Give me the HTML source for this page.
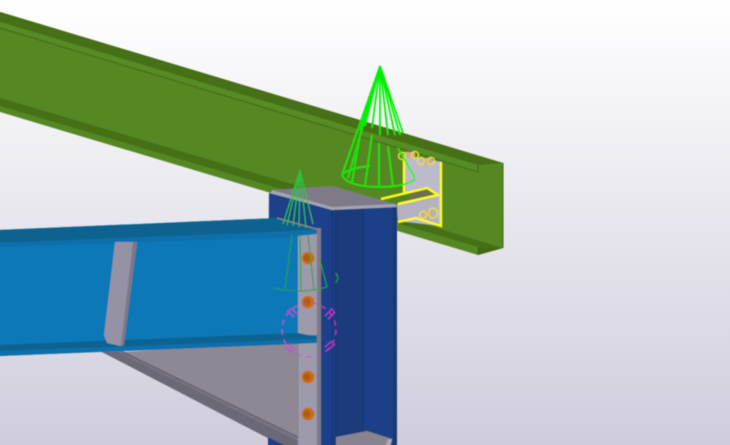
<!DOCTYPE html>
<html><head><meta charset="utf-8"><style>
html,body{margin:0;padding:0;width:730px;height:445px;overflow:hidden;background:#fff}
svg{display:block}
</style></head><body>
<svg xmlns="http://www.w3.org/2000/svg" width="730" height="445" viewBox="0 0 730 445">
<defs>
<linearGradient id="bg" x1="0" y1="0" x2="0" y2="1">
<stop offset="0" stop-color="#ffffff"/><stop offset="1" stop-color="#cfcddc"/>
</linearGradient>
<filter id="s" filterUnits="userSpaceOnUse" x="-20" y="-20" width="770" height="500"><feGaussianBlur stdDeviation=".4"/></filter>
</defs>
<rect width="730" height="445" fill="url(#bg)"/>
<g filter="url(#s)">

<!-- green beam -->
<polygon points="-10,9 503,163 503,248 478,255 -10,109" fill="#548723"/>
<polygon points="-10,9 503,163 478,165 -10,19" fill="#446f18"/>
<polygon points="-10,19 478,165 478,173 -10,25" fill="#578b25"/>
<polyline points="-10,25 478,172 478,165" fill="none" stroke="#3f6816" stroke-width="1"/>
<polygon points="-10,95 295,185 503,248 478,247 -10,103" fill="#446f18"/>
<polygon points="478,247 503,248 478,255" fill="#3f6816"/>
<line x1="503" y1="163" x2="503" y2="248" stroke="#3f6816" stroke-width="1"/>
<line x1="478" y1="247" x2="478" y2="255" stroke="#3f6816" stroke-width="1"/>

<!-- connection plate -->
<polygon points="403,155 442,162 442,226 398,221 398,205 403,195" fill="#bcbbc9"/>
<polygon points="381,198 427,188 438,195 397,203" fill="#6d6f4e"/>
<polygon points="381,198 405,193 412,198 397,203" fill="#4f8420"/>
<polygon points="397,204 438,195 438,224 415,218 398,222" fill="#b4b2c0"/>
<g fill="none" stroke="#ffff00" stroke-width="2.2">
<polyline points="404,158 404,192"/>
<polyline points="441,162 441,226 416,218 398,222"/>
<polyline points="381,199 427,188 438,195 398,204"/>
<polyline points="367,210 381,213"/>
</g>
<line x1="362" y1="210" x2="362" y2="233" stroke="#ffff00" stroke-width="1.5"/>
<rect x="404" y="152" width="11" height="6" fill="#c9ad92"/>
<rect x="423" y="158" width="9" height="6" fill="#c9ad92"/>
<rect x="424" y="211" width="9" height="7" fill="#c9ad92"/>
<g fill="none" stroke="#f0e020" stroke-width="1.3">
<ellipse cx="402" cy="156" rx="3.5" ry="3.5"/><ellipse cx="415" cy="155" rx="3.5" ry="3.5"/>
<ellipse cx="421" cy="161" rx="3.5" ry="3.5"/><ellipse cx="431" cy="161" rx="3.5" ry="3.5"/>
<ellipse cx="423" cy="215" rx="3.5" ry="3.5"/><ellipse cx="433" cy="213" rx="4.5" ry="5"/>
</g>

<!-- column -->
<polygon points="269,193 332,210 397,207 397,460 268,460" fill="#1d3f87"/>
<polygon points="269,193 332,210 334,460 268,460" fill="#1f4189"/>
<rect x="332" y="209" width="4" height="251" fill="#1e3e84"/>
<line x1="332" y1="209" x2="332" y2="460" stroke="#173268" stroke-width=".8"/>
<rect x="336" y="209" width="27" height="251" fill="#1b3a7b"/>
<line x1="336" y1="209" x2="336" y2="460" stroke="#173268" stroke-width=".8"/>
<rect x="363" y="208" width="30" height="252" fill="#1e3f88"/>
<rect x="393" y="207" width="4" height="253" fill="#1a3773"/>
<line x1="363" y1="208" x2="363" y2="460" stroke="#173268" stroke-width=".8"/>

<!-- cap plate -->
<polygon points="272,190 332,186 395,204 332,208" fill="#7e7a87"/>
<polygon points="272,190 332,207 395,204 397,207 332,210 271,193" fill="#a5a3b4"/>

<!-- bottom plate -->
<polygon points="336,437 367,431 392,439 387,460 336,460" fill="#87838f"/>
<polygon points="392,439 387,460 380,460 388,439" fill="#aaa8b6"/>

<!-- haunch -->
<polygon points="123,352 298,340 298,437" fill="#8e8794"/>
<polygon points="100,351 123,351 298,437 298,460 285,460 268,437" fill="#767382"/>
<polyline points="123,352 298,437" fill="none" stroke="#5f5c6a" stroke-width="1"/>
<polygon points="118,352 298,441 298,460 285,447 100,351" fill="#6c6977"/>
<polygon points="268,437 286,446 290,460 268,460" fill="#1d3f87"/>

<!-- end plate -->
<rect x="298" y="230" width="19" height="230" fill="#9c9aab"/>
<rect x="317" y="228" width="4" height="232" fill="#7d7a88"/>
<line x1="298" y1="230" x2="298" y2="460" stroke="#86838f" stroke-width="1"/>

<!-- blue beam -->
<polygon points="-10,230.4 278,218 320,229 320,339 298,344 -10,356.4" fill="#0b78b8"/>
<polygon points="298,230 317,229 317,335 298,335" fill="#9c9aab"/>
<polygon points="-10,230.4 278,218 320,230 -10,243.4" fill="#09628f"/>
<polygon points="-10,243.4 320,230 320,236 -10,247.4" fill="#0a6fab"/>
<polygon points="-10,345.4 298,333 317,337 317,341 -10,351.4" fill="#09628f"/>
<polygon points="-10,351.4 317,339 317,343 -10,356.4" fill="#0a70ad"/>
<polygon points="298,236 317,234 317,333 298,333" fill="#9c9aab"/>
<polygon points="317,229 321,229 321,460 317,460" fill="#7d7a88"/>
<polygon points="298,333 317,338 298,339" fill="#0a628f"/>
<line x1="277" y1="218" x2="320" y2="230" stroke="#83808c" stroke-width="1.5"/>

<!-- stiffener -->
<polygon points="115,242 137,242 123,345 120,346 107,343 104,335" fill="#9592a5"/>
<polygon points="133,242 137,242 124,345 121,346" fill="#7b7887"/>

<!-- bolts -->
<g fill="#cc6c10">
<circle cx="308" cy="258" r="6.3"/><circle cx="308" cy="302" r="6.3"/>
<circle cx="308" cy="377" r="6.3"/><circle cx="308" cy="414" r="6.3"/>
</g>
<g fill="#ae5c0a">
<circle cx="307" cy="258" r="3.5"/><circle cx="307" cy="302" r="3.5"/>
<circle cx="307" cy="377" r="3.5"/><circle cx="307" cy="414" r="3.5"/>
</g>

<!-- small cone -->
<g fill="none" stroke="#2cc040" stroke-width="1.2">
<line x1="300" y1="170" x2="283" y2="224"/><line x1="300" y1="170" x2="287" y2="225"/>
<line x1="300" y1="170" x2="293" y2="226"/><line x1="300" y1="170" x2="299" y2="227"/>
<line x1="300" y1="170" x2="306" y2="228"/><line x1="300" y1="170" x2="313" y2="224"/>
</g>
<g fill="none" stroke="#25a038" stroke-width="1.1">
<line x1="292" y1="235" x2="285" y2="289"/>
<line x1="300" y1="235" x2="301" y2="291"/>
<line x1="308" y1="235" x2="314" y2="290"/>
<line x1="320" y1="260" x2="327" y2="287"/>
<polyline points="273,288 285,290 300,291 314,290 327,287"/>
<polyline points="336,273 338,278 336,283"/>
</g>

<!-- magenta -->
<g fill="none" stroke="#d22fd8" stroke-width="1">
<circle cx="309" cy="330" r="27" stroke-dasharray="5 5"/>
<path d="M288 311l6 6M291 308l6 6M287 312l4-3"/>
<path d="M325 316l7-7M328 319l7-7M331 308l3 4"/>
<path d="M285 347l7 6M288 344l7 6"/>
<path d="M325 347l7-6M328 350l7-6"/>
</g>

<!-- large cone -->
<g fill="none" stroke="#00f000" stroke-width="1.7">
<line x1="380" y1="66" x2="342" y2="175"/>
<line x1="380" y1="66" x2="348" y2="178"/>
<line x1="380" y1="66" x2="360" y2="130"/>
<line x1="380" y1="66" x2="365" y2="126"/>
<line x1="380" y1="66" x2="372" y2="128"/>
<line x1="380" y1="66" x2="380" y2="135"/>
<line x1="380" y1="66" x2="388" y2="135"/>
<line x1="380" y1="66" x2="395" y2="135"/>
<line x1="380" y1="66" x2="400" y2="135"/>
<line x1="380" y1="66" x2="403" y2="133"/>
<line x1="360" y1="135" x2="352" y2="182"/>
<line x1="372" y1="135" x2="365" y2="186"/>
<line x1="379" y1="143" x2="379" y2="187"/>
<line x1="388" y1="146" x2="393" y2="186"/>
<line x1="398" y1="148" x2="415" y2="178"/>
<path d="M342 175C345 183 360 187 379 187C396 187 411 184 415 179"/>
<path d="M342 175C347 170 357 167 370 166"/>
</g>
</g>
</svg>
</body></html>
